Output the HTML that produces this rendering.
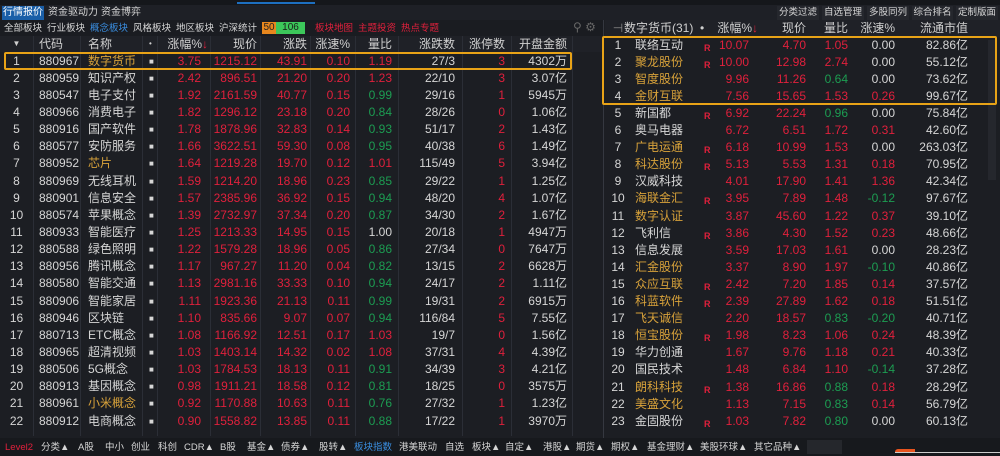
<!DOCTYPE html>
<html><head><meta charset="utf-8"><style>
*{margin:0;padding:0;box-sizing:border-box}
body{width:1000px;height:456px;background:#1c1e23;overflow:hidden;font-family:"Liberation Sans","Noto Sans CJK SC",sans-serif;font-size:12px;color:#d6d6d6;position:relative}
.a{position:absolute;white-space:nowrap}
.r{color:#e0203c}.g{color:#1c9d52}.y{color:#d8a23a}.w{color:#d6d6d6}
.row{position:absolute;height:17px;line-height:17px;left:0;width:1000px}
.row span{position:absolute;white-space:nowrap}
.L .i{left:0;width:33px;text-align:center}.L .c{left:39px}.L .n{left:88px}.L .d{left:149px;font-size:8px}
.L .p1{left:160px;width:41px;text-align:right}.L .p2{left:200px;width:57px;text-align:right}.L .p3{left:262px;width:45px;text-align:right}
.L .p4{left:305px;width:45px;text-align:right}.L .p5{left:350px;width:42px;text-align:right}.L .p6{left:400px;width:55px;text-align:right}
.L .p7{left:470px;width:35px;text-align:right}.L .p8{left:505px;width:62px;text-align:right}
.R .i{left:605px;width:26px;text-align:center}.R .n{left:635px}.R .k{left:704px;top:3px;font-size:9px;font-weight:bold;color:#e0203c}
.R .p1{left:712px;width:37px;text-align:right}.R .p2{left:760px;width:46px;text-align:right}.R .p3{left:808px;width:40px;text-align:right}
.R .p4{left:850px;width:45px;text-align:right}.R .p5{left:900px;width:68px;text-align:right}
.vl{position:absolute;width:1px;background:#2b2e36}
.hdr{color:#d0d0d0}
.t{position:absolute;font-size:10px;line-height:14px;top:6px;white-space:nowrap}
.s{position:absolute;font-size:9.5px;line-height:15px;top:21px;white-space:nowrap}
.b{position:absolute;font-size:9.5px;line-height:15px;top:440px;white-space:nowrap}
.tb{position:absolute;top:6px;height:14px;background:#25272d;font-size:9.5px;line-height:14px;text-align:center;white-space:nowrap}
</style></head><body>
<div class="a" style="left:0;top:0;width:1000px;height:5px;background:#15171b"></div>
<div class="a" style="left:237px;top:2px;width:78px;height:2px;background:#1d6fc0"></div>
<div class="a" style="left:0;top:5px;width:1000px;height:15px;background:#1e2026"></div>
<div class="t" style="left:2px;width:42px;background:#1a5fa8;color:#fff;text-align:center">行情报价</div>
<div class="t" style="left:48px">资金驱动力</div>
<div class="t" style="left:101px">资金博弈</div>
<div class="tb" style="left:777px;width:42px">分类过滤</div>
<div class="tb" style="left:822px;width:42px">自选管理</div>
<div class="tb" style="left:867px;width:42px">多股同列</div>
<div class="tb" style="left:912px;width:41px">综合排名</div>
<div class="tb" style="left:956px;width:42px">定制版面</div>
<div class="a" style="left:0;top:20px;width:603px;height:16px;background:#1a1c21"></div>
<div class="s" style="left:4px">全部板块</div>
<div class="s" style="left:47px">行业板块</div>
<div class="s" style="left:90px;color:#3a8ee0">概念板块</div>
<div class="s" style="left:133px">风格板块</div>
<div class="s" style="left:176px">地区板块</div>
<div class="s" style="left:219px">沪深统计</div>
<div class="a" style="left:262px;top:22px;width:14px;height:12px;background:#e8871e;color:#222;font-size:10px;line-height:12px;text-align:center">50</div>
<div class="a" style="left:276px;top:22px;width:29px;height:12px;background:#3cc75a;color:#1a1a1a;font-size:10px;line-height:12px;text-align:center">106</div>
<div class="s r" style="left:315px">板块地图</div>
<div class="s r" style="left:358px">主题投资</div>
<div class="s r" style="left:401px">热点专题</div>
<div class="a" style="left:573px;top:20px;color:#666;font-size:12px">⚲ ⚙</div>
<div class="a" style="left:0;top:36px;width:603px;height:16px;background:#1f2127"></div>
<div class="row L hdr" style="top:36px;height:16px;line-height:16px">
<span class="i" style="font-size:8px">▼</span><span class="c">代码</span><span class="n">名称</span><span class="d">•</span><span class="p1" style="left:150px;width:58px">涨幅%<b class="r">↓</b></span><span class="p2">现价</span><span class="p3">涨跌</span><span class="p4">涨速%</span><span class="p5">量比</span><span class="p6">涨跌数</span><span class="p7" style="left:460px;width:45px">涨停数</span><span class="p8">开盘金额</span></div>
<div class="a" style="left:605px;top:20px;width:395px;height:17px;background:#1f2127"></div>
<div class="row R hdr" style="top:20px">
<span class="i" style="color:#888">⊣</span><span class="n" style="left:624px">数字货币(31)</span><span style="left:700px">•</span><span class="p1" style="left:700px;width:58px">涨幅%<b class="r">↓</b></span><span class="p2">现价</span><span class="p3">量比</span><span class="p4">涨速%</span><span class="p5">流通市值</span></div>
<div class="vl" style="left:33px;top:36px;height:400px"></div>
<div class="vl" style="left:80px;top:36px;height:400px"></div>
<div class="vl" style="left:142px;top:36px;height:400px"></div>
<div class="vl" style="left:157px;top:36px;height:400px"></div>
<div class="vl" style="left:210px;top:36px;height:400px"></div>
<div class="vl" style="left:260px;top:36px;height:400px"></div>
<div class="vl" style="left:310px;top:36px;height:400px"></div>
<div class="vl" style="left:355px;top:36px;height:400px"></div>
<div class="vl" style="left:398px;top:36px;height:400px"></div>
<div class="vl" style="left:462px;top:36px;height:400px"></div>
<div class="vl" style="left:511px;top:36px;height:400px"></div>
<div class="vl" style="left:572px;top:36px;height:400px"></div>
<div class="vl" style="left:603px;top:20px;height:418px;background:#353840"></div>
<div class="a" style="left:988px;top:40px;width:8px;height:140px;background:#25272d"></div>
<div class="row L" style="top:52.5px"><span class="i">1</span><span class="c">880967</span><span class="n y">数字货币</span><span class="d">■</span><span class="p1 r">3.75</span><span class="p2 r">1215.12</span><span class="p3 r">43.91</span><span class="p4 r">0.10</span><span class="p5 r">1.19</span><span class="p6">27/3</span><span class="p7 r">3</span><span class="p8">4302万</span></div>
<div class="row L" style="top:69.6px"><span class="i">2</span><span class="c">880959</span><span class="n">知识产权</span><span class="d">■</span><span class="p1 r">2.42</span><span class="p2 r">896.51</span><span class="p3 r">21.20</span><span class="p4 r">0.20</span><span class="p5 r">1.23</span><span class="p6">22/10</span><span class="p7 r">3</span><span class="p8">3.07亿</span></div>
<div class="row L" style="top:86.8px"><span class="i">3</span><span class="c">880547</span><span class="n">电子支付</span><span class="d">■</span><span class="p1 r">1.92</span><span class="p2 r">2161.59</span><span class="p3 r">40.77</span><span class="p4 r">0.15</span><span class="p5 g">0.99</span><span class="p6">29/16</span><span class="p7 r">1</span><span class="p8">5945万</span></div>
<div class="row L" style="top:103.9px"><span class="i">4</span><span class="c">880966</span><span class="n">消费电子</span><span class="d">■</span><span class="p1 r">1.82</span><span class="p2 r">1296.12</span><span class="p3 r">23.18</span><span class="p4 r">0.20</span><span class="p5 g">0.84</span><span class="p6">28/26</span><span class="p7 r">0</span><span class="p8">1.06亿</span></div>
<div class="row L" style="top:121.1px"><span class="i">5</span><span class="c">880916</span><span class="n">国产软件</span><span class="d">■</span><span class="p1 r">1.78</span><span class="p2 r">1878.96</span><span class="p3 r">32.83</span><span class="p4 r">0.14</span><span class="p5 g">0.93</span><span class="p6">51/17</span><span class="p7 r">2</span><span class="p8">1.43亿</span></div>
<div class="row L" style="top:138.2px"><span class="i">6</span><span class="c">880577</span><span class="n">安防服务</span><span class="d">■</span><span class="p1 r">1.66</span><span class="p2 r">3622.51</span><span class="p3 r">59.30</span><span class="p4 r">0.08</span><span class="p5 g">0.95</span><span class="p6">40/38</span><span class="p7 r">6</span><span class="p8">1.49亿</span></div>
<div class="row L" style="top:155.4px"><span class="i">7</span><span class="c">880952</span><span class="n y">芯片</span><span class="d">■</span><span class="p1 r">1.64</span><span class="p2 r">1219.28</span><span class="p3 r">19.70</span><span class="p4 r">0.12</span><span class="p5 r">1.01</span><span class="p6">115/49</span><span class="p7 r">5</span><span class="p8">3.94亿</span></div>
<div class="row L" style="top:172.5px"><span class="i">8</span><span class="c">880969</span><span class="n">无线耳机</span><span class="d">■</span><span class="p1 r">1.59</span><span class="p2 r">1214.20</span><span class="p3 r">18.96</span><span class="p4 r">0.23</span><span class="p5 g">0.85</span><span class="p6">29/22</span><span class="p7 r">1</span><span class="p8">1.25亿</span></div>
<div class="row L" style="top:189.6px"><span class="i">9</span><span class="c">880901</span><span class="n">信息安全</span><span class="d">■</span><span class="p1 r">1.57</span><span class="p2 r">2385.96</span><span class="p3 r">36.92</span><span class="p4 r">0.15</span><span class="p5 g">0.94</span><span class="p6">48/20</span><span class="p7 r">4</span><span class="p8">1.07亿</span></div>
<div class="row L" style="top:206.8px"><span class="i">10</span><span class="c">880574</span><span class="n">苹果概念</span><span class="d">■</span><span class="p1 r">1.39</span><span class="p2 r">2732.97</span><span class="p3 r">37.34</span><span class="p4 r">0.20</span><span class="p5 g">0.87</span><span class="p6">34/30</span><span class="p7 r">2</span><span class="p8">1.67亿</span></div>
<div class="row L" style="top:223.9px"><span class="i">11</span><span class="c">880933</span><span class="n">智能医疗</span><span class="d">■</span><span class="p1 r">1.25</span><span class="p2 r">1213.33</span><span class="p3 r">14.95</span><span class="p4 r">0.15</span><span class="p5">1.00</span><span class="p6">20/18</span><span class="p7 r">1</span><span class="p8">4947万</span></div>
<div class="row L" style="top:241.1px"><span class="i">12</span><span class="c">880588</span><span class="n">绿色照明</span><span class="d">■</span><span class="p1 r">1.22</span><span class="p2 r">1579.28</span><span class="p3 r">18.96</span><span class="p4 r">0.05</span><span class="p5 g">0.86</span><span class="p6">27/34</span><span class="p7 r">0</span><span class="p8">7647万</span></div>
<div class="row L" style="top:258.2px"><span class="i">13</span><span class="c">880956</span><span class="n">腾讯概念</span><span class="d">■</span><span class="p1 r">1.17</span><span class="p2 r">967.27</span><span class="p3 r">11.20</span><span class="p4 r">0.04</span><span class="p5 g">0.82</span><span class="p6">13/15</span><span class="p7 r">2</span><span class="p8">6628万</span></div>
<div class="row L" style="top:275.4px"><span class="i">14</span><span class="c">880580</span><span class="n">智能交通</span><span class="d">■</span><span class="p1 r">1.13</span><span class="p2 r">2981.16</span><span class="p3 r">33.33</span><span class="p4 r">0.10</span><span class="p5 g">0.94</span><span class="p6">24/17</span><span class="p7 r">2</span><span class="p8">1.11亿</span></div>
<div class="row L" style="top:292.5px"><span class="i">15</span><span class="c">880906</span><span class="n">智能家居</span><span class="d">■</span><span class="p1 r">1.11</span><span class="p2 r">1923.36</span><span class="p3 r">21.13</span><span class="p4 r">0.11</span><span class="p5 g">0.99</span><span class="p6">19/31</span><span class="p7 r">2</span><span class="p8">6915万</span></div>
<div class="row L" style="top:309.7px"><span class="i">16</span><span class="c">880946</span><span class="n">区块链</span><span class="d">■</span><span class="p1 r">1.10</span><span class="p2 r">835.66</span><span class="p3 r">9.07</span><span class="p4 r">0.07</span><span class="p5 g">0.94</span><span class="p6">116/84</span><span class="p7 r">5</span><span class="p8">7.55亿</span></div>
<div class="row L" style="top:326.8px"><span class="i">17</span><span class="c">880713</span><span class="n">ETC概念</span><span class="d">■</span><span class="p1 r">1.08</span><span class="p2 r">1166.92</span><span class="p3 r">12.51</span><span class="p4 r">0.17</span><span class="p5 r">1.03</span><span class="p6">19/7</span><span class="p7 r">0</span><span class="p8">1.56亿</span></div>
<div class="row L" style="top:344px"><span class="i">18</span><span class="c">880965</span><span class="n">超清视频</span><span class="d">■</span><span class="p1 r">1.03</span><span class="p2 r">1403.14</span><span class="p3 r">14.32</span><span class="p4 r">0.02</span><span class="p5 r">1.08</span><span class="p6">37/31</span><span class="p7 r">4</span><span class="p8">4.39亿</span></div>
<div class="row L" style="top:361.1px"><span class="i">19</span><span class="c">880506</span><span class="n">5G概念</span><span class="d">■</span><span class="p1 r">1.03</span><span class="p2 r">1784.53</span><span class="p3 r">18.13</span><span class="p4 r">0.11</span><span class="p5 g">0.91</span><span class="p6">34/39</span><span class="p7 r">3</span><span class="p8">4.21亿</span></div>
<div class="row L" style="top:378.3px"><span class="i">20</span><span class="c">880913</span><span class="n">基因概念</span><span class="d">■</span><span class="p1 r">0.98</span><span class="p2 r">1911.21</span><span class="p3 r">18.58</span><span class="p4 r">0.12</span><span class="p5 g">0.81</span><span class="p6">18/25</span><span class="p7 r">0</span><span class="p8">3575万</span></div>
<div class="row L" style="top:395.4px"><span class="i">21</span><span class="c">880961</span><span class="n y">小米概念</span><span class="d">■</span><span class="p1 r">0.92</span><span class="p2 r">1170.88</span><span class="p3 r">10.63</span><span class="p4 r">0.11</span><span class="p5 g">0.76</span><span class="p6">27/32</span><span class="p7 r">1</span><span class="p8">1.23亿</span></div>
<div class="row L" style="top:412.6px"><span class="i">22</span><span class="c">880912</span><span class="n">电商概念</span><span class="d">■</span><span class="p1 r">0.90</span><span class="p2 r">1558.82</span><span class="p3 r">13.85</span><span class="p4 r">0.11</span><span class="p5 g">0.88</span><span class="p6">17/22</span><span class="p7 r">1</span><span class="p8">3970万</span></div>
<div class="row R" style="top:36.5px"><span class="i">1</span><span class="n">联络互动</span><span class="k">R</span><span class="p1 r">10.07</span><span class="p2 r">4.70</span><span class="p3 r">1.05</span><span class="p4">0.00</span><span class="p5">82.86亿</span></div>
<div class="row R" style="top:53.6px"><span class="i">2</span><span class="n y">聚龙股份</span><span class="k">R</span><span class="p1 r">10.00</span><span class="p2 r">12.98</span><span class="p3 r">2.74</span><span class="p4">0.00</span><span class="p5">55.12亿</span></div>
<div class="row R" style="top:70.7px"><span class="i">3</span><span class="n y">智度股份</span><span class="p1 r">9.96</span><span class="p2 r">11.26</span><span class="p3 g">0.64</span><span class="p4">0.00</span><span class="p5">73.62亿</span></div>
<div class="row R" style="top:87.8px"><span class="i">4</span><span class="n y">金财互联</span><span class="p1 r">7.56</span><span class="p2 r">15.65</span><span class="p3 r">1.53</span><span class="p4 r">0.26</span><span class="p5">99.67亿</span></div>
<div class="row R" style="top:104.9px"><span class="i">5</span><span class="n">新国都</span><span class="k">R</span><span class="p1 r">6.92</span><span class="p2 r">22.24</span><span class="p3 g">0.96</span><span class="p4">0.00</span><span class="p5">75.84亿</span></div>
<div class="row R" style="top:122px"><span class="i">6</span><span class="n">奥马电器</span><span class="p1 r">6.72</span><span class="p2 r">6.51</span><span class="p3 r">1.72</span><span class="p4 r">0.31</span><span class="p5">42.60亿</span></div>
<div class="row R" style="top:139.1px"><span class="i">7</span><span class="n y">广电运通</span><span class="k">R</span><span class="p1 r">6.18</span><span class="p2 r">10.99</span><span class="p3 r">1.53</span><span class="p4">0.00</span><span class="p5">263.03亿</span></div>
<div class="row R" style="top:156.2px"><span class="i">8</span><span class="n y">科达股份</span><span class="k">R</span><span class="p1 r">5.13</span><span class="p2 r">5.53</span><span class="p3 r">1.31</span><span class="p4 r">0.18</span><span class="p5">70.95亿</span></div>
<div class="row R" style="top:173.3px"><span class="i">9</span><span class="n">汉威科技</span><span class="p1 r">4.01</span><span class="p2 r">17.90</span><span class="p3 r">1.41</span><span class="p4 r">1.36</span><span class="p5">42.34亿</span></div>
<div class="row R" style="top:190.4px"><span class="i">10</span><span class="n y">海联金汇</span><span class="k">R</span><span class="p1 r">3.95</span><span class="p2 r">7.89</span><span class="p3 r">1.48</span><span class="p4 g">-0.12</span><span class="p5">97.67亿</span></div>
<div class="row R" style="top:207.5px"><span class="i">11</span><span class="n y">数字认证</span><span class="p1 r">3.87</span><span class="p2 r">45.60</span><span class="p3 r">1.22</span><span class="p4 r">0.37</span><span class="p5">39.10亿</span></div>
<div class="row R" style="top:224.6px"><span class="i">12</span><span class="n">飞利信</span><span class="k">R</span><span class="p1 r">3.86</span><span class="p2 r">4.30</span><span class="p3 r">1.52</span><span class="p4 r">0.23</span><span class="p5">48.66亿</span></div>
<div class="row R" style="top:241.7px"><span class="i">13</span><span class="n">信息发展</span><span class="p1 r">3.59</span><span class="p2 r">17.03</span><span class="p3 r">1.61</span><span class="p4">0.00</span><span class="p5">28.23亿</span></div>
<div class="row R" style="top:258.8px"><span class="i">14</span><span class="n y">汇金股份</span><span class="p1 r">3.37</span><span class="p2 r">8.90</span><span class="p3 r">1.97</span><span class="p4 g">-0.10</span><span class="p5">40.86亿</span></div>
<div class="row R" style="top:275.9px"><span class="i">15</span><span class="n y">众应互联</span><span class="k">R</span><span class="p1 r">2.42</span><span class="p2 r">7.20</span><span class="p3 r">1.85</span><span class="p4 r">0.14</span><span class="p5">37.57亿</span></div>
<div class="row R" style="top:293px"><span class="i">16</span><span class="n y">科蓝软件</span><span class="k">R</span><span class="p1 r">2.39</span><span class="p2 r">27.89</span><span class="p3 r">1.62</span><span class="p4 r">0.18</span><span class="p5">51.51亿</span></div>
<div class="row R" style="top:310.1px"><span class="i">17</span><span class="n y">飞天诚信</span><span class="p1 r">2.20</span><span class="p2 r">18.57</span><span class="p3 g">0.83</span><span class="p4 g">-0.20</span><span class="p5">40.71亿</span></div>
<div class="row R" style="top:327.2px"><span class="i">18</span><span class="n y">恒宝股份</span><span class="k">R</span><span class="p1 r">1.98</span><span class="p2 r">8.23</span><span class="p3 r">1.06</span><span class="p4 r">0.24</span><span class="p5">48.39亿</span></div>
<div class="row R" style="top:344.3px"><span class="i">19</span><span class="n">华力创通</span><span class="p1 r">1.67</span><span class="p2 r">9.76</span><span class="p3 r">1.18</span><span class="p4 r">0.21</span><span class="p5">40.33亿</span></div>
<div class="row R" style="top:361.4px"><span class="i">20</span><span class="n">国民技术</span><span class="p1 r">1.48</span><span class="p2 r">6.84</span><span class="p3 r">1.10</span><span class="p4 g">-0.14</span><span class="p5">37.28亿</span></div>
<div class="row R" style="top:378.5px"><span class="i">21</span><span class="n y">朗科科技</span><span class="k">R</span><span class="p1 r">1.38</span><span class="p2 r">16.86</span><span class="p3 g">0.88</span><span class="p4 r">0.18</span><span class="p5">28.29亿</span></div>
<div class="row R" style="top:395.6px"><span class="i">22</span><span class="n y">美盛文化</span><span class="p1 r">1.13</span><span class="p2 r">7.15</span><span class="p3 g">0.83</span><span class="p4 r">0.14</span><span class="p5">56.79亿</span></div>
<div class="row R" style="top:412.7px"><span class="i">23</span><span class="n">金固股份</span><span class="k">R</span><span class="p1 r">1.03</span><span class="p2 r">7.82</span><span class="p3 g">0.80</span><span class="p4">0.00</span><span class="p5">60.13亿</span></div>
<div class="a" style="left:4px;top:52px;width:568px;height:18px;border:2px solid #e8a317;border-radius:2px"></div>
<div class="a" style="left:602px;top:36px;width:395px;height:69px;border:2px solid #e8a317;border-radius:2px"></div>
<div class="a" style="left:0;top:438px;width:1000px;height:18px;background:#17191d"></div>
<div class="b r" style="left:5px">Level2</div>
<div class="b" style="left:41px">分类▲</div>
<div class="b" style="left:78px">A股</div>
<div class="b" style="left:105px">中小</div>
<div class="b" style="left:131px">创业</div>
<div class="b" style="left:158px">科创</div>
<div class="b" style="left:184px">CDR▲</div>
<div class="b" style="left:220px">B股</div>
<div class="b" style="left:247px">基金▲</div>
<div class="b" style="left:281px">债券▲</div>
<div class="b" style="left:319px">股转▲</div>
<div class="b" style="left:354px;color:#3a8ee0">板块指数</div>
<div class="b" style="left:399px">港美联动</div>
<div class="b" style="left:445px">自选</div>
<div class="b" style="left:472px">板块▲</div>
<div class="b" style="left:505px">自定▲</div>
<div class="b" style="left:543px">港股▲</div>
<div class="b" style="left:576px">期货▲</div>
<div class="b" style="left:611px">期权▲</div>
<div class="b" style="left:647px">基金理财▲</div>
<div class="b" style="left:700px">美股环球▲</div>
<div class="b" style="left:754px">其它品种▲</div>
<div class="a" style="left:807px;top:440px;width:35px;height:14px;background:#25272c"></div>
<div class="a" style="left:895px;top:452px;width:105px;height:1px;background:#ccc"></div>
<div class="a" style="left:895px;top:449px;width:20px;height:3px;background:#e8541e;border-radius:3px 0 0 0"></div>
</body></html>
